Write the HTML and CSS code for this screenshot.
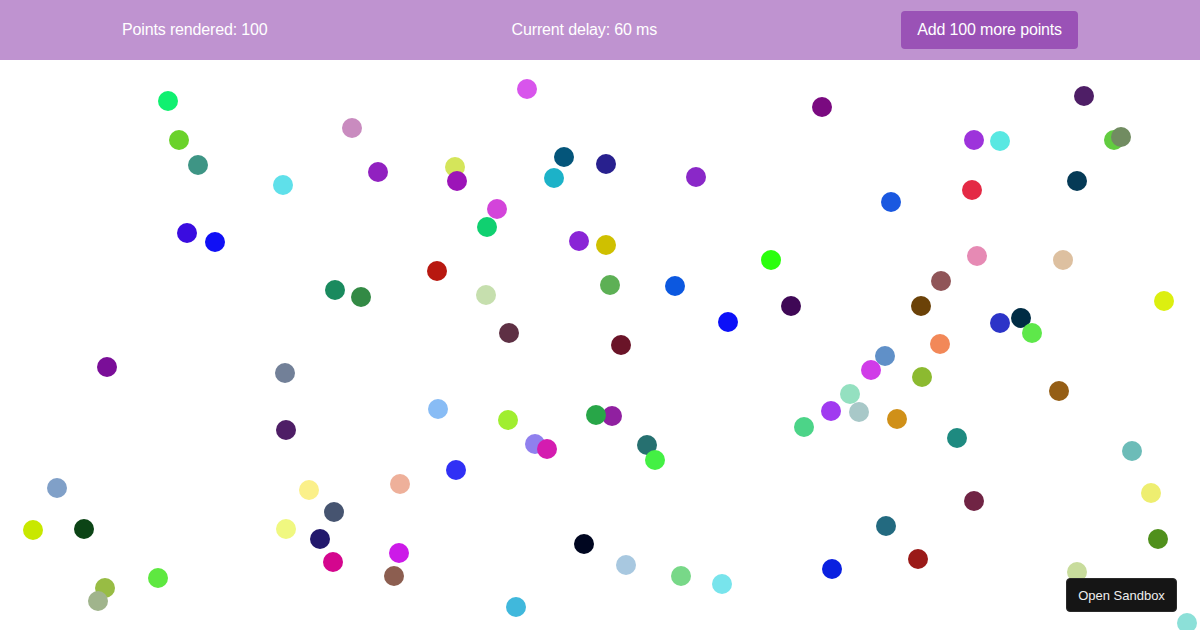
FILE: index.html
```html
<!DOCTYPE html>
<html>
<head>
<meta charset="utf-8">
<title>Points</title>
<link rel="stylesheet" href="styles.css">
</head>
<body>
<header class="bar">
  <span class="stat">Points rendered: 100</span>
  <span class="stat">Current delay: 60 ms</span>
  <button class="add-btn">Add 100 more points</button>
</header>
<main class="canvas">
  <span class="dot" style="left:158px;top:31px;background:#10f070"></span>
  <span class="dot" style="left:169px;top:70px;background:#6ad22a"></span>
  <span class="dot" style="left:188px;top:95px;background:#3e9585"></span>
  <span class="dot" style="left:342px;top:58px;background:#c98bbf"></span>
  <span class="dot" style="left:368px;top:102px;background:#9121c0"></span>
  <span class="dot" style="left:273px;top:115px;background:#5fe0ea"></span>
  <span class="dot" style="left:177px;top:163px;background:#3a0ce0"></span>
  <span class="dot" style="left:205px;top:172px;background:#1010f5"></span>
  <span class="dot" style="left:325px;top:220px;background:#1a8a5e"></span>
  <span class="dot" style="left:351px;top:227px;background:#338a45"></span>

  <span class="dot" style="left:517px;top:19px;background:#d855ec"></span>
  <span class="dot" style="left:445px;top:97px;background:#d4e55a"></span>
  <span class="dot" style="left:447px;top:111px;background:#9c14b8"></span>
  <span class="dot" style="left:554px;top:87px;background:#04557a"></span>
  <span class="dot" style="left:544px;top:108px;background:#1cb2c8"></span>
  <span class="dot" style="left:596px;top:94px;background:#28208e"></span>
  <span class="dot" style="left:686px;top:107px;background:#8a28c8"></span>
  <span class="dot" style="left:487px;top:139px;background:#d344da"></span>
  <span class="dot" style="left:477px;top:157px;background:#10d070"></span>
  <span class="dot" style="left:569px;top:171px;background:#8a25d6"></span>
  <span class="dot" style="left:596px;top:175px;background:#cfc000"></span>
  <span class="dot" style="left:427px;top:201px;background:#b81810"></span>
  <span class="dot" style="left:476px;top:225px;background:#c6dfae"></span>
  <span class="dot" style="left:600px;top:215px;background:#5db055"></span>
  <span class="dot" style="left:665px;top:216px;background:#0c58e0"></span>
  <span class="dot" style="left:761px;top:190px;background:#2aff0c"></span>
  <span class="dot" style="left:781px;top:236px;background:#3f0856"></span>
  <span class="dot" style="left:718px;top:252px;background:#0c10f8"></span>
  <span class="dot" style="left:499px;top:263px;background:#5e3044"></span>
  <span class="dot" style="left:611px;top:275px;background:#6a1428"></span>

  <span class="dot" style="left:812px;top:37px;background:#7a0a80"></span>
  <span class="dot" style="left:1074px;top:26px;background:#4e1e66"></span>
  <span class="dot" style="left:964px;top:70px;background:#9d33db"></span>
  <span class="dot" style="left:990px;top:71px;background:#59e8e2"></span>
  <span class="dot" style="left:1104px;top:70px;background:#62cc40"></span>
  <span class="dot" style="left:1111px;top:67px;background:#718c61"></span>
  <span class="dot" style="left:962px;top:120px;background:#e42a45"></span>
  <span class="dot" style="left:1067px;top:111px;background:#053a56"></span>
  <span class="dot" style="left:881px;top:132px;background:#1a58e0"></span>
  <span class="dot" style="left:967px;top:186px;background:#e68ab4"></span>
  <span class="dot" style="left:1053px;top:190px;background:#ddc0a0"></span>
  <span class="dot" style="left:931px;top:211px;background:#905558"></span>
  <span class="dot" style="left:911px;top:236px;background:#6b4208"></span>
  <span class="dot" style="left:1154px;top:231px;background:#dcef10"></span>
  <span class="dot" style="left:990px;top:253px;background:#2c34c8"></span>
  <span class="dot" style="left:1011px;top:248px;background:#002c44"></span>
  <span class="dot" style="left:1022px;top:263px;background:#5ee84a"></span>
  <span class="dot" style="left:930px;top:274px;background:#f28858"></span>

  <span class="dot" style="left:97px;top:297px;background:#7a0e98"></span>
  <span class="dot" style="left:275px;top:303px;background:#728098"></span>
  <span class="dot" style="left:276px;top:360px;background:#4e1e66"></span>
  <span class="dot" style="left:47px;top:418px;background:#80a0c8"></span>
  <span class="dot" style="left:23px;top:460px;background:#c8e800"></span>
  <span class="dot" style="left:74px;top:459px;background:#0c4416"></span>
  <span class="dot" style="left:95px;top:518px;background:#98bc44"></span>
  <span class="dot" style="left:88px;top:531px;background:#a0b48c"></span>
  <span class="dot" style="left:148px;top:508px;background:#5ee840"></span>
  <span class="dot" style="left:299px;top:420px;background:#fbf08a"></span>
  <span class="dot" style="left:324px;top:442px;background:#465470"></span>
  <span class="dot" style="left:276px;top:459px;background:#f0f880"></span>
  <span class="dot" style="left:310px;top:469px;background:#22186c"></span>
  <span class="dot" style="left:323px;top:492px;background:#d4068e"></span>
  <span class="dot" style="left:390px;top:414px;background:#eeb09a"></span>
  <span class="dot" style="left:389px;top:483px;background:#cc1ae8"></span>
  <span class="dot" style="left:384px;top:506px;background:#8c5e50"></span>

  <span class="dot" style="left:428px;top:339px;background:#88bcf5"></span>
  <span class="dot" style="left:498px;top:350px;background:#a0ee30"></span>
  <span class="dot" style="left:525px;top:374px;background:#9080ee"></span>
  <span class="dot" style="left:537px;top:379px;background:#d41cb0"></span>
  <span class="dot" style="left:602px;top:346px;background:#9020a0"></span>
  <span class="dot" style="left:586px;top:345px;background:#28a648"></span>
  <span class="dot" style="left:446px;top:400px;background:#3030f5"></span>
  <span class="dot" style="left:637px;top:375px;background:#267070"></span>
  <span class="dot" style="left:645px;top:390px;background:#44f044"></span>
  <span class="dot" style="left:574px;top:474px;background:#000620"></span>
  <span class="dot" style="left:616px;top:495px;background:#a8c8e0"></span>
  <span class="dot" style="left:671px;top:506px;background:#78d888"></span>
  <span class="dot" style="left:712px;top:514px;background:#78e4ec"></span>
  <span class="dot" style="left:506px;top:537px;background:#40b8dc"></span>
  <span class="dot" style="left:794px;top:357px;background:#4cd488"></span>

  <span class="dot" style="left:875px;top:286px;background:#6090c8"></span>
  <span class="dot" style="left:861px;top:300px;background:#d03ce8"></span>
  <span class="dot" style="left:912px;top:307px;background:#8cba30"></span>
  <span class="dot" style="left:840px;top:324px;background:#94e0c0"></span>
  <span class="dot" style="left:821px;top:341px;background:#a03af0"></span>
  <span class="dot" style="left:849px;top:342px;background:#a8c8c8"></span>
  <span class="dot" style="left:887px;top:349px;background:#d09018"></span>
  <span class="dot" style="left:1049px;top:321px;background:#955e15"></span>
  <span class="dot" style="left:947px;top:368px;background:#1e8a80"></span>
  <span class="dot" style="left:1122px;top:381px;background:#6cbcb8"></span>
  <span class="dot" style="left:1141px;top:423px;background:#eeee70"></span>
  <span class="dot" style="left:964px;top:431px;background:#702444"></span>
  <span class="dot" style="left:876px;top:456px;background:#236a80"></span>
  <span class="dot" style="left:1148px;top:469px;background:#50901c"></span>
  <span class="dot" style="left:908px;top:489px;background:#9a1a18"></span>
  <span class="dot" style="left:822px;top:499px;background:#0a20e0"></span>
  <span class="dot" style="left:1067px;top:502px;background:#c8dc9c"></span>
  <span class="dot" style="left:1177px;top:553px;background:#8ce0d8"></span>
</main>
<a class="sandbox-badge">Open Sandbox</a>
</body>
</html>
```
FILE: styles.css
```css
html, body {
  margin: 0;
  padding: 0;
  background: #ffffff;
  font-family: "Liberation Sans", Arial, sans-serif;
}

.bar {
  height: 60px;
  background: #bf93d0;
  display: flex;
  justify-content: space-around;
  align-items: center;
  color: #ffffff;
  font-size: 16px;
  letter-spacing: -0.15px;
}

.stat {
  line-height: 18px;
}

.add-btn {
  font-family: "Liberation Sans", Arial, sans-serif;
  font-size: 16px;
  letter-spacing: -0.15px;
  color: #ffffff;
  background: #9a52b6;
  border: none;
  border-radius: 4px;
  height: 38px;
  padding: 0 16px;
  line-height: 18px;
}

.canvas {
  position: relative;
  height: 570px;
  overflow: hidden;
}

.dot {
  position: absolute;
  width: 20px;
  height: 20px;
  border-radius: 50%;
}

.sandbox-badge {
  position: fixed;
  right: 23px;
  bottom: 18px;
  width: 111px;
  height: 34px;
  box-sizing: border-box;
  display: flex;
  align-items: center;
  justify-content: center;
  background: #151515;
  color: #eeeeee;
  font-size: 13px;
  border-radius: 4px;
  border: 1px solid #2a2a2a;
}
```
